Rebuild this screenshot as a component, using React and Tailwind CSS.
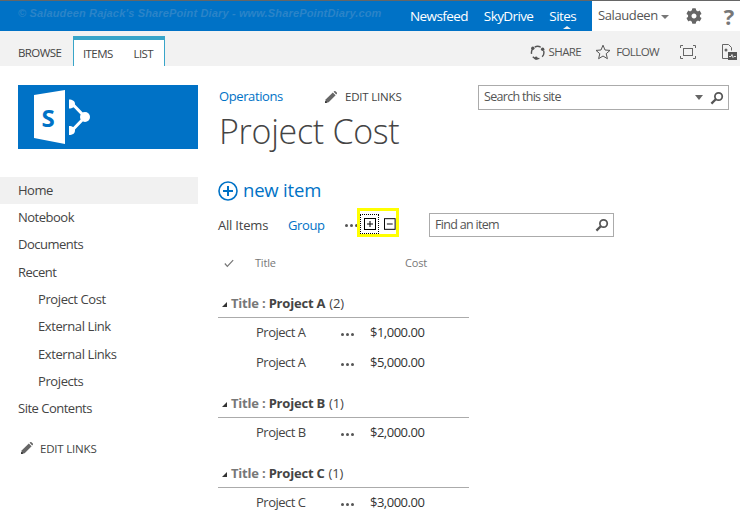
import React from "react";
import { FaCog } from "react-icons/fa";

const FONT = "[font-family:'Open_Sans','Noto_Sans',sans-serif]";

const NAV = [
  { label: "Home", active: true },
  { label: "Notebook" },
  { label: "Documents" },
  { label: "Recent" },
  { label: "Project Cost", sub: true },
  { label: "External Link", sub: true },
  { label: "External Links", sub: true },
  { label: "Projects", sub: true },
  { label: "Site Contents" },
];

const GROUPS = [
  { name: "Project A", count: 2, rows: ["$1,000.00", "$5,000.00"] },
  { name: "Project B", count: 1, rows: ["$2,000.00"] },
  { name: "Project C", count: 1, rows: ["$3,000.00"] },
];

const Pencil = ({ className }) => (
  <svg viewBox="0 0 14 14" className={className} fill="#666">
    <path d="M1 13l1-4 7.5-7.5 3 3L5 12z" />
    <path d="M10.3.8l.7-.6a1 1 0 011.3 0l1.5 1.5a1 1 0 010 1.3l-.6.7z" />
    <path d="M1 13l.7-2.6 1.9 1.9z" fill="#222" />
  </svg>
);

const Search = ({ className }) => (
  <svg viewBox="0 0 16 16" className={className} fill="none" stroke="#555">
    <circle cx="9.8" cy="6.2" r="4.2" strokeWidth="2" />
    <path d="M6.6 9.4L1.6 14.4" strokeWidth="2.6" />
  </svg>
);

const Dots = ({ color = "bg-[#555]" }) => (
  <span className="flex gap-[2px]">
    <i className={`w-[3px] h-[3px] rounded-full ${color}`} />
    <i className={`w-[3px] h-[3px] rounded-full ${color}`} />
    <i className={`w-[3px] h-[3px] rounded-full ${color}`} />
  </span>
);

const Logo = () => (
  <div className="w-[180px] h-[64px] bg-[#0072c6] flex items-center pl-[16px]">
    <svg viewBox="0 0 56 56" className="w-[56px] h-[56px]">
      <path d="M0 6L31 1v54L0 49z" fill="#fff" />
      <path d="M38 14.500L51 28 38 41.500" fill="none" stroke="#fff" strokeWidth="3" />
      <path d="M35 10.500c3.500 0 6 1.500 6 4.500s-2.500 4.500-6 4.500z" fill="#fff" />
      <path d="M35 37c3.500 0 6 1.500 6 4.500s-2.500 4.500-6 4.500z" fill="#fff" />
      <circle cx="51" cy="28" r="5" fill="#fff" />
      <text x="14" y="37.500" textAnchor="middle" fontSize="24" fontWeight="700" fill="#0072c6" fontFamily="Open Sans, sans-serif">S</text>
    </svg>
  </div>
);

const Group = ({ name, count, rows }) => (
  <div className="mb-[9px] w-[251px]">
    <div className="h-[31px] pt-[3px] border-b border-[#ababab] flex items-center text-[13px]">
      <span className="w-0 h-0 ml-[4px] mr-[4px] mt-[2px] border-l-[5px] border-l-transparent border-b-[5px] border-b-[#333]" />
      <span className="font-bold text-[#777]">Title :&nbsp;</span>
      <span className="font-bold text-[#444]">{name}</span>
      <span className="text-[#444] ml-[4px]">({count})</span>
    </div>
    {rows.map((cost, i) => (
      <div key={i} className="h-[30px] flex items-center text-[13px] text-[#444] tracking-[-0.5px]">
        <span className="w-[123px] pl-[38px] shrink-0 whitespace-nowrap">{name}</span>
        <span className="w-[29px] shrink-0 pt-[3px]"><Dots /></span>
        <span className="text-[#333]">{cost}</span>
      </div>
    ))}
  </div>
);

export default function App() {
  return (
    <div className={`w-[740px] h-[530px] overflow-hidden bg-white ${FONT} tracking-[-0.2px]`}>
      {/* Suite bar */}
      <div className="h-[31px] flex border-t border-[#666]">
        <div className="flex-1 bg-[#0072c6] flex items-center justify-between pl-[18px] pr-[16px]">
          <span className="text-[11px] font-semibold italic text-[#2b84c8] tracking-[0.15px] pb-[6px] whitespace-nowrap [font-family:'Liberation_Sans',sans-serif]">© Salaudeen Rajack's SharePoint Diary - www.SharePointDiary.com</span>
          <nav className="flex gap-[16px] text-[13.500px] tracking-[-0.6px] text-white whitespace-nowrap">
            <span>Newsfeed</span>
            <span>SkyDrive</span>
            <span className="relative">
              Sites
              <i className="absolute left-[14px] -bottom-[3px] border-x-[4px] border-x-transparent border-b-[3px] border-b-[#f2f2f2]" />
            </span>
          </nav>
        </div>
        <div className="w-[148px] flex items-center pl-[6px] text-[#666]">
          <span className="text-[13px] text-[#555] tracking-[-0.4px]">Salaudeen</span>
          <i className="ml-[3px] mt-[2px] border-x-[4px] border-x-transparent border-t-[4px] border-t-[#777]" />
          <FaCog className="ml-[17px] w-[16px] h-[16px] text-[#666]" />
          <span className="ml-[22px] text-[22px] font-bold text-[#777] leading-none">?</span>
        </div>
      </div>

      {/* Ribbon */}
      <div className="h-[35px] bg-[#f2f2f2] flex items-end text-[11.500px] text-[#444] tracking-[-0.6px]">
        <span className="ml-[18px] w-[55px] h-[30px] pt-[3px] flex items-center">BROWSE</span>
        <div className="h-[30px] w-[92px] pt-[1px] bg-white border-x border-[#38a5c9] border-t-[4px] flex items-center pl-[9px] gap-[21px]">
          <span>ITEMS</span>
          <span>LIST</span>
        </div>
        <div className="ml-auto h-[35px] pt-[7px] flex items-center text-[#555]">
          <svg viewBox="0 0 16 16" className="w-[15px] h-[15px]" fill="none" stroke="#555" strokeWidth="1.500">
            <path d="M5 2.200a6.500 6.500 0 016.500.2M14.500 6a6.500 6.500 0 01-1.500 6.500M10 14.300a6.500 6.500 0 01-7-1.800M1.700 9.500A6.500 6.500 0 013 4" />
            <circle cx="3" cy="3.500" r="1.800" fill="#555" stroke="none" />
            <circle cx="13.500" cy="4.500" r="1.800" fill="#555" stroke="none" />
            <circle cx="6.500" cy="14" r="1.800" fill="#555" stroke="none" />
          </svg>
          <span className="ml-[4px]">SHARE</span>
          <svg viewBox="0 0 16 16" className="ml-[14px] w-[16px] h-[16px]" fill="none" stroke="#555">
            <path d="M8 1.200l2 4.800 5 .4-3.800 3.300 1.200 5L8 12l-4.400 2.700 1.200-5L1 6.400l5-.4z" />
          </svg>
          <span className="ml-[5px]">FOLLOW</span>
          <svg viewBox="0 0 16 14" className="ml-[21px] w-[16px] h-[14px]" fill="none" stroke="#666">
            <rect x="3.500" y="3.500" width="9" height="7" />
            <path d="M.5 3V.5H3M13 .5h2.500V3M15.500 11v2.500H13M3 13.500H.5V11" />
          </svg>
          <svg viewBox="0 0 16 16" className="ml-[25px] mr-[3px] w-[16px] h-[16px]" fill="none" stroke="#666">
            <path d="M10 14.500H1.500V.5h6l3 3v3" />
            <circle cx="5" cy="6" r="1.500" fill="#666" stroke="none" />
            <rect x="7" y="8" width="9" height="8" fill="#555" stroke="none" />
            <path d="M8 12.500h2l1-2 1 3 1-1h2" stroke="#fff" strokeWidth="0.800" />
          </svg>
        </div>
      </div>

      <div className="flex">
        {/* Quick launch */}
        <aside className="w-[218px] shrink-0">
          <div className="pl-[18px] pt-[19px]"><Logo /></div>
          <ul className="mt-[28px] w-[198px] text-[13px] text-[#444] tracking-[-0.5px]">
            {NAV.map((n) => (
              <li
                key={n.label}
                className={`h-[27.300px] flex items-center ${n.sub ? "pl-[38px] tracking-[-0.4px]" : "pl-[18px]"} ${n.active ? "bg-[#f1f1f1]" : ""}`}
              >
                {n.label}
              </li>
            ))}
          </ul>
          <div className="mt-[17px] pl-[20px] flex items-center gap-[7px] text-[11.500px] text-[#444]">
            <Pencil className="w-[13px] h-[13px]" />
            EDIT LINKS
          </div>
        </aside>

        {/* Main */}
        <main className="flex-1 min-w-0">
          <div className="h-[110px] relative">
            <div className="flex pt-[19px] pr-[11px] items-start">
              <div className="flex items-center h-[24px] w-[65px] text-[13px] text-[#0072c6] pl-[1px] tracking-[-0.4px]">Operations</div>
              <div className="ml-[41px] h-[24px] flex items-center gap-[8px] text-[11.500px] text-[#444]">
                <Pencil className="w-[13px] h-[13px]" />
                EDIT LINKS
              </div>
              <div className="ml-auto w-[251px] h-[25px] border border-[#ababab] flex items-center pl-[5px] pr-[4px] text-[12.500px] text-[#555] tracking-[-0.7px]">
                <span>Search this site</span>
                <i className="ml-auto border-x-[4px] border-x-transparent border-t-[5px] border-t-[#666]" />
                <Search className="ml-[7px] w-[14px] h-[14px]" />
              </div>
            </div>
            <h1 className="pl-[1px] mt-[-1px] text-[34px] font-light text-[#444] leading-[44px] tracking-[-0.3px]">Project Cost</h1>
          </div>

          <div className="flex items-center h-[30px] text-[#0072c6]">
            <svg viewBox="0 0 20 20" className="w-[20px] h-[20px]" fill="none" stroke="#0072c6">
              <circle cx="10" cy="10" r="9" strokeWidth="1.600" />
              <path d="M10 5v10M5 10h10" strokeWidth="2" />
            </svg>
            <span className="ml-[5px] text-[18.500px] leading-none pb-[1px]">new item</span>
          </div>

          <div className="flex items-start h-[29px] mt-[2px] text-[13px]">
            <span className="w-[70px] h-[29px] pt-[6px] flex items-center text-[#444]">All Items</span>
            <span className="w-[57px] h-[29px] pt-[6px] flex items-center text-[#0072c6] tracking-[-0.4px]">Group</span>
            <span className="h-[29px] pt-[5px] flex items-center"><Dots /></span>
            <div className="ml-[-1px] w-[42px] h-[29px] border-[3px] border-[#ffff00] flex items-start">
              <div className="mt-[3px] w-[20px] h-[20px] border border-dotted border-black flex items-center justify-center">
                <svg viewBox="0 0 12 12" className="w-[12px] h-[12px]" fill="none" stroke="#000">
                  <rect x=".5" y=".5" width="11" height="11" />
                  <path d="M3 6h6M6 3v6" />
                </svg>
              </div>
              <svg viewBox="0 0 12 12" className="ml-[5px] mt-[7px] w-[12px] h-[12px]" fill="none" stroke="#000">
                <rect x=".5" y=".5" width="11" height="11" />
                <path d="M3 6h6" />
              </svg>
            </div>
            <div className="ml-[30px] w-[185px] h-[24px] border border-[#ababab] flex items-center pl-[5px] pr-[4px] mt-[5px] text-[12.500px] text-[#555] tracking-[-0.7px]">
              <span>Find an item</span>
              <Search className="ml-auto w-[14px] h-[14px]" />
            </div>
          </div>

          <div className="flex items-center h-[30px] mt-[11px] text-[11px] text-[#777]">
            <svg viewBox="0 0 12 10" className="ml-[6px] w-[10px] h-[9px]" fill="none" stroke="#777" strokeWidth="1.500">
              <path d="M1 5l3 3.500L11 1" />
            </svg>
            <span className="ml-[21px] w-[150px]">Title</span>
            <span>Cost</span>
          </div>

          <div className="mt-[9px]">
            {GROUPS.map((g) => <Group key={g.name} {...g} />)}
          </div>
        </main>
      </div>
    </div>
  );
}
